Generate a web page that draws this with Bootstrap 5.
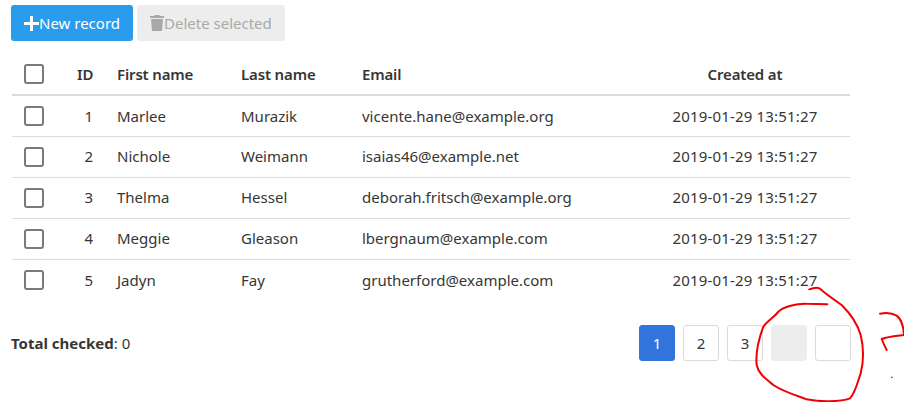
<!DOCTYPE html>
<html lang="en">
<head>
<meta charset="utf-8">
<title>Records</title>
<link href="https://cdn.jsdelivr.net/npm/bootstrap@5.3.0/dist/css/bootstrap.min.css" rel="stylesheet">
<style>
body{font-family:"Noto Sans","Open Sans","Liberation Sans",sans-serif;font-size:15px;color:#363636;background:#fff;width:904px;height:402px;overflow:hidden;position:relative}
.page-wrap{padding:5px 53px 0 11px}
.btn.act{height:36px;font-size:15px;border-radius:3px;border:0;padding:0 13px;display:inline-flex;align-items:center}
.act svg{display:block;flex:none}
.btn.act-new{background:#2a9ced;color:#fff}
.btn.act-del,.btn.act-del:disabled{background:#ededed;color:#a9a9a9;opacity:1}
.tbl-holder{margin:13px 0 0 1px}
.rec{table-layout:fixed;width:838px;margin:0;color:#363636}
.rec th,.rec td{height:41px;padding:0 12px;vertical-align:middle;border-bottom:1px solid #dbdbdb;box-shadow:none;background:transparent;font-size:15px;white-space:nowrap}
.rec thead th{font-weight:600;border-bottom:2px solid #dbdbdb;letter-spacing:-.15px}
.rec tbody tr:last-child td{border-bottom:0}
.rec .stamp{letter-spacing:.17px}
.box{display:block;width:20px;height:20px;border:2px solid #7a7a7a;border-radius:3px}
.foot{margin:25px 0 0 0;height:36px}
.pg{width:36px;height:36px;border:1px solid #dbdbdb;border-radius:3px;display:flex;align-items:center;justify-content:center;color:#363636;font-size:15px;background:#fff}
.pg.on{background:#3273dc;border-color:#3273dc;color:#fff}
.pg.off{background:#ededed;border-color:#ededed}
.scribble{position:absolute;left:620px;top:270px;width:284px;height:132px;pointer-events:none}
</style>
</head>
<body>
<div class="page-wrap">
  <div class="d-flex gap-1">
    <button type="button" class="btn act act-new"><svg width="15" height="15" viewBox="0 0 15 15"><path fill="#fff" d="M6 0h3v6h6v3H9v6H6V9H0V6h6z"/></svg>New record</button>
    <button type="button" class="btn act act-del" disabled><svg width="14" height="16" viewBox="0 0 14 16"><path fill="#a9a9a9" d="M5 0h4l1 1h4v2H0V1h4zM1 4h12l-1 12H2z"/></svg>Delete selected</button>
  </div>
  <div class="tbl-holder">
    <table class="table rec">
      <colgroup><col style="width:53px"><col style="width:40px"><col style="width:124px"><col style="width:121px"><col style="width:290px"><col style="width:210px"></colgroup>
      <thead><tr><th><span class="box"></span></th><th class="text-end">ID</th><th>First name</th><th>Last name</th><th>Email</th><th class="text-center">Created at</th></tr></thead>
      <tbody>
        <tr><td><span class="box"></span></td><td class="text-end">1</td><td>Marlee</td><td>Murazik</td><td>vicente.hane@example.org</td><td class="text-center stamp">2019-01-29 13:51:27</td></tr>
        <tr><td><span class="box"></span></td><td class="text-end">2</td><td>Nichole</td><td>Weimann</td><td>isaias46@example.net</td><td class="text-center stamp">2019-01-29 13:51:27</td></tr>
        <tr><td><span class="box"></span></td><td class="text-end">3</td><td>Thelma</td><td>Hessel</td><td>deborah.fritsch@example.org</td><td class="text-center stamp">2019-01-29 13:51:27</td></tr>
        <tr><td><span class="box"></span></td><td class="text-end">4</td><td>Meggie</td><td>Gleason</td><td>lbergnaum@example.com</td><td class="text-center stamp">2019-01-29 13:51:27</td></tr>
        <tr><td><span class="box"></span></td><td class="text-end">5</td><td>Jadyn</td><td>Fay</td><td>grutherford@example.com</td><td class="text-center stamp">2019-01-29 13:51:27</td></tr>
      </tbody>
    </table>
  </div>
  <div class="foot d-flex align-items-center justify-content-between">
    <div><strong class="fw-bold">Total checked</strong>: 0</div>
    <div class="d-flex gap-2">
      <span class="pg on">1</span><span class="pg">2</span><span class="pg">3</span><span class="pg off"></span><span class="pg"></span>
    </div>
  </div>
</div>
<svg class="scribble" viewBox="0 0 852 396" fill="none" stroke="#f00000" stroke-width="6" stroke-linecap="round" stroke-linejoin="round">
  <path d="M568 58C578 54 588 50 598 55C615 70 640 88 665 105C690 130 712 160 722 195C732 235 732 270 722 310C712 340 705 370 690 385C660 396 600 396 560 388C525 375 490 365 460 345C435 325 415 310 410 285C406 245 415 210 430 170C445 150 465 140 475 125C490 110 530 100 560 101C585 101 605 102 622 103"/>
  <path d="M780 131C795 128 815 128 830 137C845 148 850 165 852 195C830 198 805 200 785 207C790 220 795 230 800 240"/>
  <circle cx="815" cy="322" r="1" stroke-width="3"/>
</svg>
<script src="https://cdn.jsdelivr.net/npm/bootstrap@5.3.0/dist/js/bootstrap.bundle.min.js"></script>
</body>
</html>
